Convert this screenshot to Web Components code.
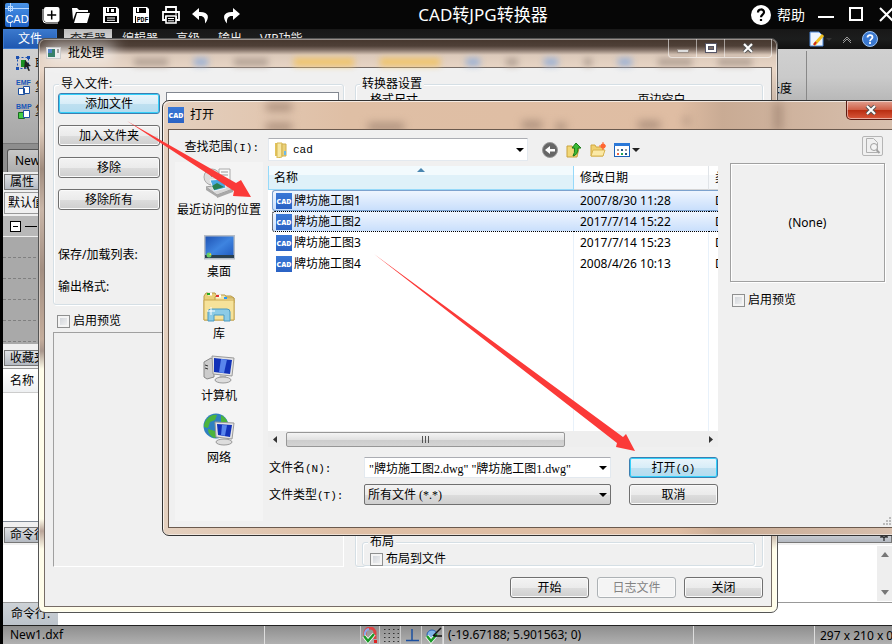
<!DOCTYPE html>
<html lang="zh-CN">
<head>
<meta charset="utf-8">
<title>CAD转JPG转换器</title>
<style>
html,body{margin:0;height:100%;overflow:hidden}
body{font:12px/16px "Noto Sans","Noto Sans CJK SC",sans-serif;color:#000;background:#000}
</style>
</head>
<body>
<app-shell>
  <title-bar slot="top"></title-bar>
  <ribbon-tabs slot="top"></ribbon-tabs>
  <ribbon-panel slot="top"></ribbon-panel>
  <side-panels></side-panels>
  <status-bar slot="bottom"></status-bar>
</app-shell>
<batch-dialog></batch-dialog>
<open-dialog></open-dialog>
<pointer-arrows></pointer-arrows>

<script>
const base = `<style>
*{box-sizing:border-box}
button,input,select{font:inherit;color:inherit;margin:0}
.plain{border:0;background:none;padding:0;display:block}
svg{display:block}
</style>`;
function define(name, html) {
  const t = document.createElement('template');
  t.innerHTML = base + html;
  customElements.define(name, class extends HTMLElement {
    constructor() {
      super();
      this.attachShadow({mode: 'open'}).append(t.content.cloneNode(true));
    }
    connectedCallback() {
      const root = this.shadowRoot;
      root.querySelectorAll('[data-attr]').forEach(n => { n.textContent = this.getAttribute(n.dataset.attr) || ''; });
      if (this.hasAttribute('disabled')) root.querySelectorAll('button').forEach(b => { b.disabled = true; });
    }
  });
}

define('cad-icon', `<style>:host{display:block;width:16px;height:16px;flex:none}svg{width:100%;height:100%}</style>
<svg viewBox="0 0 16 16"><defs><linearGradient id="g" x2="0" y2="1"><stop stop-color="#3a78d6"/><stop offset="1" stop-color="#2a62c4"/></linearGradient></defs><rect width="16" height="16" fill="url(#g)"/><text x="8" y="11" text-anchor="middle" font-family="Open Sans" font-weight="800" font-size="7" fill="#fff">CAD</text></svg>`);

define('title-bar', `<style>
:host{display:flex;align-items:center;height:29px;background:#060606;color:#fff;padding:0 0 0 2px;position:relative}
.tools{display:flex;gap:12px;align-items:center;flex:1;margin-left:13px}
.tools svg{width:18px;height:18px}
h1{font-size:17px;line-height:28px;font-weight:400;margin:0 0 0 32px}
.end{flex:1;display:flex;justify-content:flex-end;align-items:center}
.help{display:flex;gap:6px;align-items:center;font-size:14px;margin-right:13px}
.win{display:flex;gap:14px;margin-right:-2px}
</style>
<svg width="24" height="24" viewBox="0 0 24 24"><defs><linearGradient id="b" x2="0" y2="1"><stop stop-color="#4a94e8"/><stop offset="1" stop-color="#1d5fc4"/></linearGradient></defs><rect width="24" height="24" rx="2" fill="url(#b)"/><path d="M5.500 0v9M5.500 20v4M0 5.500h24" stroke="#b8d8ff" fill="none"/><rect x="3.500" y="3.500" width="4" height="4" fill="none" stroke="#b8d8ff"/><text x="12" y="20" text-anchor="middle" font-family="Liberation Sans" font-size="11" fill="#fff">CAD</text></svg>
<div class="tools">
<button class="plain" aria-label="新建"><svg viewBox="0 0 18 18"><path d="M1 3v11a3 3 0 0 0 3 3h12" fill="none" stroke="#fff"/><rect x="2" y="1" width="15.500" height="15" rx="2" fill="#fff"/><path d="M9.700 4.500v9M5.200 9h9" stroke="#000" stroke-width="1.500"/></svg></button>
<button class="plain" aria-label="打开"><svg viewBox="0 0 18 18"><path d="M0 2h5l2 2h9v2H4L1 14z" fill="#fff"/><path d="M5 7h13l-3 10H2z" fill="#fff"/></svg></button>
<button class="plain" aria-label="保存"><svg viewBox="0 0 18 18"><path d="M1 1h14l2 2v14H1z" fill="#fff"/><path d="M4 2h10v5H4zM3 10h12v6H3z" fill="#000"/><path d="M5 2h2v4H5zM5 11.500h8v1H5zM5 13.700h8v1H5zM9 3h3v3H9z" fill="#fff"/></svg></button>
<button class="plain" aria-label="保存为PDF"><svg viewBox="0 0 18 18"><path d="M1 1h14l2 2v14H1z" fill="#fff"/><path d="M4 2h10v5H4zM3 10h14v7H3z" fill="#000"/><path d="M5 2h2v4H5z" fill="#fff"/><rect x="4" y="10" width="13" height="7" fill="#fff"/><text x="10.500" y="16" text-anchor="middle" font-family="Liberation Mono" font-weight="bold" font-size="6.500" fill="#000">PDF</text></svg></button>
<button class="plain" aria-label="打印"><svg viewBox="0 0 18 18"><path d="M4 5V1h10v4M1 6h16v8h-3v-3H4v3H1z" fill="none" stroke="#fff" stroke-width="1.800"/><path d="M4 10h10v7H4z" fill="#000" stroke="#fff" stroke-width="1.600"/><path d="M6 12.500h6M6 14.800h6M13 8h2" stroke="#fff"/></svg></button>
<button class="plain" aria-label="撤销"><svg viewBox="0 0 18 18"><path d="M7 2L0 8l7 6v-4c4-.5 6.500 1 6 7.500 5-6 4-12-6-11.500z" fill="#fff"/></svg></button>
<button class="plain" aria-label="重做"><svg viewBox="0 0 18 18"><path d="M11 2l7 6-7 6v-4c-4-.5-6.500 1-6 7.500-5-6-4-12 6-11.500z" fill="#fff"/></svg></button>
</div>
<h1>CAD转JPG转换器</h1>
<div class="end">
<button class="plain help"><svg width="20" height="20" viewBox="0 0 20 20"><circle cx="10" cy="10" r="10" fill="#fff"/><path d="M7 7.500C7 3.500 13 3.500 13 7.300c0 2.300-3 2.500-3 5M10 14v2" stroke="#000" stroke-width="2.200" fill="none"/></svg><span>帮助</span></button>
<div class="win">
<button class="plain" aria-label="最小化"><svg width="16" height="16"><path d="M0 10h16" stroke="#fff" stroke-width="2"/></svg></button>
<button class="plain" aria-label="最大化"><svg width="16" height="16"><rect x="2" y="1" width="12" height="12" fill="none" stroke="#fff" stroke-width="2"/></svg></button>
<button class="plain" aria-label="关闭"><svg width="16" height="16"><path d="M2 1l13 13M15 1L2 14" stroke="#fff" stroke-width="2"/></svg></button>
</div></div>`);

define('ribbon-tabs', `<style>
:host{display:flex;height:20px;background:linear-gradient(#181818,#1c1d1d 50%,#111);color:#eee;align-items:stretch}
button{line-height:18px!important}
.file{background:linear-gradient(#3a78cc,#1f58b0);width:54px;color:#fff;border:1px solid #3c7ad0}
.on{background:linear-gradient(#bbb,#eee);color:#222;width:48px;margin:0 10px 0 7px}
nav{display:flex;flex:1}
.gap{margin-right:18px}
.end{display:flex;align-items:center;gap:10px;margin-right:14px}
</style>
<nav><button class="plain file">文件</button><button class="plain on">查看器</button><button class="plain gap">编辑器</button><button class="plain gap">高级</button><button class="plain gap">输出</button><button class="plain">VIP功能</button></nav>
<div class="end">
<button class="plain" aria-label="样式"><svg width="23" height="16"><path d="M1 1h9l4 4v10H1z" fill="#eef5ff" stroke="#4a86d8"/><path d="M5 14L14 4" stroke="#f0c020" stroke-width="3"/><path d="M5 14l2-3" stroke="#c22" stroke-width="2"/><path d="M17 7h6l-3 3z" fill="#333"/></svg></button>
<button class="plain" aria-label="折叠"><svg width="10" height="9"><path d="M1 6l4-4 4 4M1 8l4-4 4 4" fill="none" stroke="#999"/></svg></button>
<button class="plain" aria-label="帮助"><svg width="16" height="16"><circle cx="8" cy="8" r="7.500" fill="#3a78d0" stroke="#9cc4f4"/><path d="M5.500 6.500C5.500 3.300 10.500 3.300 10.500 6.200c0 1.800-2.500 2-2.500 4M8 11v2" stroke="#fff" stroke-width="1.800" fill="none"/></svg></button>
</div>`);

define('ribbon-panel', `<style>
:host{display:flex;height:94px;background:linear-gradient(#d0d0d0,#cacaca 30%,#b4b4b4 60%,#a6a6a6);border-bottom:1px solid #777;justify-content:space-between}
ul{list-style:none;margin:0;padding:7px 0 0 13px;display:flex;flex-direction:column;gap:7px}
.len{border-right:1px solid #888;margin:2px 85px 2px 0;padding:30px 14px 0 0}
button{display:flex!important;gap:3px}
</style>
<ul>
<li><button class="plain"><svg width="16" height="16"><rect x="1.500" y="1.500" width="11" height="11" fill="none" stroke="#1c50b0" stroke-dasharray="2 2"/><path d="M0 0h3v3H0zM11 0h3v3h-3zM0 11h3v3H0z" fill="#1c50b0"/><path d="M5 4h5v7H5z" fill="#1a9020"/><path d="M9 4l6 6-3 .4 2 4-1.500.6-2-4L8 13z" fill="#222"/></svg>取</button></li>
<li><button class="plain"><svg width="16" height="17"><text x="0" y="6" font-family="Liberation Sans" font-weight="bold" font-size="7" fill="#1856b8">EMF</text><path d="M2.500 9.500h6v6h-6zM7.500 7.500h6v7h-6z" fill="#fff" stroke="#1c50a0"/></svg>复</button></li>
<li><button class="plain"><svg width="16" height="17"><text x="0" y="6" font-family="Liberation Sans" font-weight="bold" font-size="7" fill="#1856b8">BMP</text><path d="M2.500 9.500h6v6h-6z" fill="#4c4" stroke="#186a20"/><path d="M7.500 7.500h6v7h-6z" fill="#fff" stroke="#1c50a0"/></svg>复</button></li>
</ul>
<div class="len">长度</div>`);

define('panel-head', `<style>
:host{display:flex;height:16px;margin:0 0 2px 1px;padding-left:5px;border:1px solid #777;background:linear-gradient(#e0e2e5,#b4b9c1);line-height:14px;align-items:center;justify-content:space-between;white-space:nowrap;flex:none}
</style><slot></slot><svg width="14" height="12"><path d="M3 8h8M5 8V3h4v5M7 8v4" stroke="#000" fill="none"/></svg>`);

define('side-panels', `<style>
:host{flex:1;display:flex;flex-direction:column;min-height:0;background:#f0f0f0}
.tabs{height:28px;background:#8e8e8e;padding:5px 0 0 4px;flex:none}
.tabs button{background:linear-gradient(#c8c8c8,#adadad);border:1px solid #555;border-bottom:0;border-radius:3px 3px 0 0;height:23px;width:90px;text-align:left;padding:0 0 0 7px}
.val{height:22px;border:1px solid #999;background:#f0f0f0;padding:2px 3px;margin:0 0 2px 1px;display:block;width:180px;text-align:left;flex:none}
.tree{height:128px;background:#a9a9a9;display:flex;flex-direction:column;flex:none;overflow:hidden}
.tree div{height:21px;flex:none;border-bottom:1px dashed #808080}
.tree .node{background:#b8b8b8;border-bottom:1px solid #eee;display:flex;align-items:center;padding-left:7px}
.list{background:#fff;flex:1;border-bottom:1px solid #808a96;border-top:1px solid #999;min-height:0}
.list div{background:linear-gradient(#fff,#eef0f2);border-bottom:1px solid #ccc;padding:4px 7px;height:24px}
.log{height:58px;background:#fff;border-bottom:1px solid #999;display:flex;justify-content:flex-end;flex:none}
.sb{width:15px;margin:1px 0;background:#eee;display:flex;flex-direction:column;justify-content:space-between;align-items:center;padding:6px 0}
.cmd{height:22px;display:flex;background:#fff;flex:none}
.cmd label{background:linear-gradient(#cdd2d6,#bcc3cb);width:55px;padding:3px 7px 0 8px;white-space:nowrap}
.cmd input{flex:1;border:0;min-width:0;background:#fff}
</style>
<div class="tabs"><button>New1.dxf</button></div>
<panel-head style="margin-top:2px">属性</panel-head>
<button class="val">默认值</button>
<div class="tree"><div class="node"><svg width="28" height="12"><rect x=".5" y="1.500" width="10" height="10" fill="#fff" stroke="#000"/><path d="M3 6.500h5M15 6.500h12" stroke="#000"/></svg></div><div></div><div></div><div></div><div></div><div></div></div>
<panel-head style="margin-top:6px">收藏夹</panel-head>
<div class="list"><div>名称</div></div>
<panel-head style="margin-top:5px">命令行</panel-head>
<div class="log"><div class="sb"><svg width="8" height="5"><path d="M0 5l4-5 4 5z" fill="#777"/></svg><svg width="8" height="5"><path d="M0 0l4 5 4-5z" fill="#777"/></svg></div></div>
<div class="cmd"><label for="c">命令行:</label><input id="c"></div>`);

define('status-bar', `<style>
:host{display:flex;height:18px;flex:none;background:linear-gradient(#8e8e8e,#b0b0b0);border-top:1px solid #222;line-height:17px;white-space:nowrap}
div,output{border-right:1px solid #ddd;padding:0 7px;overflow:hidden}
.a{width:262px}.b{flex:1;border-color:#ccc}.i{display:flex;gap:3px;padding:0 0 0 1px}.c{width:250px;padding:0 4px}.d{width:121px}.e{width:77px;border:0;padding:0 0 0 5px;display:flex;justify-content:space-between;align-items:flex-end}
.i button{border-right:1px solid #ccc!important}
</style>
<div class="a">New1.dxf</div><div class="b"></div>
<div class="i">
<button class="plain" aria-label="捕捉"><svg width="17" height="17"><path d="M3 12V6a5 5 0 0 1 10 0v6" fill="none" stroke="#d44" stroke-width="3"/><path d="M3 11V6a5 5 0 0 1 4-4" fill="none" stroke="#8ae" stroke-width="2"/><path d="M2 9l4 5 6-7" stroke="#fff" stroke-width="4" fill="none"/><path d="M2 9l4 5 6-7" stroke="#1a9a28" stroke-width="2.500" fill="none"/><path d="M12 13h3v3h-3z" fill="#d22"/></svg></button>
<button class="plain" aria-label="栅格"><svg width="17" height="17"><path d="M1 2.500h15M1 6.500h15M1 10.500h15M1 14.500h15" stroke="#333" stroke-dasharray="1.500 3"/></svg></button>
<button class="plain" aria-label="正交"><svg width="17" height="17"><path d="M8 2v11M2 13.500h13" stroke="#1c50a0" stroke-width="1.500"/></svg></button>
<button class="plain" aria-label="对象捕捉"><svg width="17" height="17"><circle cx="7" cy="8" r="5" fill="#7fb4e8" stroke="#2a60b0"/><path d="M2 9l4 5 6-7" stroke="#fff" stroke-width="4" fill="none"/><path d="M2 9l4 5 6-7" stroke="#1a9a28" stroke-width="2.500" fill="none"/><path d="M8 9l8-8M9 9h8" stroke="#111" stroke-width="1.500"/></svg></button>
</div>
<output class="c">(-19.67188; 5.901563; 0)</output><div class="d"></div><div class="e">297 x 210 x 0<svg width="8" height="12"><path d="M6 0h2v2H6zM2 4h2v2H2zM6 4h2v2H6zM0 8h2v2H0zM3 8h2v2H3zM6 8h2v2H6z" fill="#333"/></svg></div>`);

define('app-shell', `<style>:host{display:flex;flex-direction:column;height:100vh;padding-left:3px;background:#000}</style>
<slot name="top"></slot><slot></slot><slot name="bottom"></slot>`);

define('win-button', `<style>
:host{display:block;height:21px}
button{width:100%;height:100%;padding:0;border:1px solid #707070;border-radius:3px;background:linear-gradient(#f3f3f3,#ebebeb 50%,#dddddd 51%,#cfcfcf);box-shadow:inset 0 0 0 1px #fafafa;line-height:17px}
:host([hot]) button{border-color:#3c7fb1;background:linear-gradient(#eaf5fb,#d8edf8 50%,#bfe0f0 51%,#b2dcf0);box-shadow:inset 0 0 0 1px #35d0fa}
button:disabled{border-color:#adb2b5;background:#f4f4f4;color:#838383}
</style><button><slot></slot></button>`);

define('win-check', `<style>
:host{display:block}
label{display:flex;align-items:center;gap:3px;height:14px;white-space:nowrap}
input{appearance:none;width:13px;height:13px;border:1px solid #8e8f8f;background:linear-gradient(135deg,#cbcfd5,#f6f6f6);box-shadow:inset 0 0 0 2px #f4f4f4}
</style><label><input type="checkbox"><slot></slot></label>`);

define('group-box', `<style>
:host{display:block;min-width:0}
fieldset{margin:0;height:100%;min-width:0;border:1px solid #d5dfe5;border-radius:3px;padding:var(--pad,0);box-shadow:inset 1px 1px #fff,1px 1px #fff;display:flex;flex-direction:column}
legend{padding:0 2px;margin-left:var(--shift,0);line-height:16px;background:#f0f0f0}
</style><fieldset><legend data-attr="label"></legend><slot></slot></fieldset>`);

define('batch-dialog', `<style>
:host{position:absolute;inset:38px 114px 31px 38px;display:flex;flex-direction:column;border:1px solid #555;border-radius:7px;overflow:hidden;padding:0 5px 5px;
background:linear-gradient(#45372e,#4f4037 7px,#85746a 11px,#dccabb 16px,#e9d6c6 30px,#cdb9a9 60px,#e0cdbd 90px,#a08c7e 130px,#c9b6a8 170px,#a38f82 230px,#c4ad9c 300px,#a8968c 312px,#fffdea 330px,#fffdea 480px,#b9a498 492px,#fffdea 510px);box-shadow:inset 0 0 0 1px #ffffff70}
header{height:28px;display:flex;align-items:center;padding-left:2px;gap:7px;position:relative;flex:none}
h2{margin:0;font-size:12px;font-weight:400;flex:1;position:relative}
.ctl{display:flex;align-self:flex-start;border:1px solid #ffffff90;border-top:0;border-radius:0 0 4px 4px;position:relative;height:19px}
.ctl button{width:28px;height:18px;border-right:1px solid #ffffff80;display:grid;place-items:center}
.ctl button:last-child{width:46px;border:0}
.blur{position:absolute;inset:19px 0 0 0;filter:blur(3px);display:flex;justify-content:space-between;padding:0 20px 0 90px}
.glow{position:absolute;left:0;top:4px;width:70px;height:20px;background:#ffffffa0;filter:blur(8px)}
.blur i{width:34px;height:8px;background:#b5a497}
.blur .o{background:#f0c468;width:60px}.blur .u{background:#9db2d4;width:14px}
main{flex:1;min-height:0;background:#f0f0f0;border:1px solid #766c66;display:flex;flex-direction:column;padding:8px}
.cols{flex:1;display:flex;gap:11px;min-height:0}
.left{flex:291;display:flex;flex-direction:column;min-width:0}
.right{flex:408;--pad:0 7px 0 6px;--shift:-2px}
.right group-box{--pad:0;--shift:5px}
.in{display:flex;gap:6px}
.btns{width:102px;display:flex;flex-direction:column;gap:11px;padding-top:1px;flex:none}
.btns p{margin:0;white-space:nowrap}
.files{flex:1;border:1px solid #828790;background:#fff;height:205px;min-width:0}
.prev{flex:1;border:1px solid #a0a0a0;border-right-color:#fff;border-bottom-color:#fff}
win-check{margin:9px 0 4px 4px}
.pair{display:flex;gap:8px}
.pair group-box{height:200px;flex:265}.pair group-box+group-box{flex:128}
.lay{margin-top:auto;height:32px}.lay win-check{margin:2px 0 0 7px}
footer{display:flex;justify-content:flex-end;gap:8px;padding:10px 0 0}
footer win-button{width:79px}
</style>
<header><div class="glow"></div><div class="blur"><i></i><i class="u"></i><i></i><i class="o"></i><i class="o"></i><i class="u"></i><i style="width:12px"></i><i class="u"></i><i style="width:8px"></i><i class="u"></i><i></i><i></i></div>
<svg width="15" height="12" viewBox="0 0 15 12" style="position:relative"><rect x=".5" y=".5" width="14" height="11" fill="#eee" stroke="#ccc"/><path d="M2 2h7v8H2z" fill="#38806a"/><path d="M2 2h4v4H2z" fill="#5080c8"/><path d="M12 2v4" stroke="#555"/></svg>
<h2>批处理</h2>
<div class="ctl"><button class="plain" aria-label="最小化"><svg width="12" height="10"><rect x=".5" y="6.500" width="11" height="3" fill="#ddd" stroke="#998d85"/></svg></button><button class="plain" aria-label="最大化"><svg width="12" height="10"><rect x="2" y="2" width="8" height="6" fill="#776a64" stroke="#fff" stroke-width="2"/><rect x=".5" y=".5" width="11" height="9" fill="none" stroke="#556"/><rect x="3.500" y="3.500" width="5" height="3" fill="none" stroke="#556"/></svg></button><button class="plain" aria-label="关闭"><svg width="12" height="10"><path d="M2 1l8 8M10 1L2 9" stroke="#555" stroke-width="4"/><path d="M2 1l8 8M10 1L2 9" stroke="#fff" stroke-width="2"/></svg></button></div>
</header>
<main><div class="cols">
<div class="left">
<group-box label="导入文件:" style="--pad:0 4px 4px;--shift:1px"><div class="in"><div class="btns"><win-button hot>添加文件</win-button><win-button>加入文件夹</win-button><win-button>移除</win-button><win-button>移除所有</win-button><p style="padding-top:26px">保存/加载列表:</p><p style="padding:5px 0 5px">输出格式:</p></div><div class="files"></div></div></group-box>
<win-check>启用预览</win-check>
<div class="prev"></div>
</div>
<group-box class="right" label="转换器设置"><div class="pair"><group-box label="格式尺寸"></group-box><group-box label="页边空白"></group-box></div>
<group-box class="lay" label="布局"><win-check>布局到文件</win-check></group-box></group-box>
</div>
<footer><win-button>开始</win-button><win-button disabled>日志文件</win-button><win-button>关闭</win-button></footer>
</main>`);

define('place-item', `<style>:host{display:block}a{display:flex;flex-direction:column;align-items:center;gap:4px;color:inherit;text-decoration:none;height:62px;justify-content:flex-end;white-space:nowrap}
:host(:first-child) a{height:56px}</style><a href="#"><slot></slot><span data-attr="label"></span></a>`);

define('file-table', `<style>
:host{display:flex;flex-direction:column;background:#fff;overflow:hidden;min-height:0;position:relative}
.view{flex:1;overflow:hidden;background:linear-gradient(90deg,transparent 305px,#e8f1fa 305px 306px,transparent 306px 440px,#e8f1fa 440px 441px,transparent 441px)}
table{table-layout:fixed;width:540px;border-collapse:separate;border-spacing:0}
th,td{height:21px;padding:0 0 0 6px;font-weight:400;text-align:left;white-space:nowrap}
th{height:24px;background:linear-gradient(#fff 9px,#f6f8fa 9px);border-bottom:1px solid #d5d5d5;border-right:1px solid #e0e4e8}
th:first-child{background:linear-gradient(#f2fafd 9px,#dff1f9 9px);border:1px solid #96d9f9;border-top:0;padding-left:5px;background-clip:padding-box}
td:first-child{padding:0 0 0 4px}
td div{display:flex;align-items:center;gap:2px;height:21px;padding-left:4px}
.s td:not(:first-child),.s div{background:linear-gradient(#eff5fe,#c9dffc);border-top:1px solid #7da2ce;border-bottom:1px solid #7da2ce}
.s div{border-left:1px solid #7da2ce;border-radius:3px 0 0 3px;padding-left:3px}
.f td:not(:first-child),.f div{border-top:1px dotted #000;border-bottom:1px dotted #000}
.f div{border-left:1px dotted #000}
.up{position:absolute;top:2px;left:149px}
.sb{height:16px;display:flex;align-items:center;background:#eee;padding:0 4px;justify-content:space-between}
.sb i{height:15px;border:1px solid #979797;border-radius:2px;background:linear-gradient(#f4f4f4,#e2e2e2 50%,#ccc 51%,#d4d4d4);width:279px;margin:0 auto 0 9px;display:grid;place-items:center}
</style>
<div class="view"><table><colgroup><col style="width:306px"><col style="width:135px"><col></colgroup>
<thead><tr><th>名称</th><th>修改日期</th><th>类型</th></tr></thead>
<tbody>
<tr class="s"><td><div><cad-icon></cad-icon>牌坊施工图1</div></td><td>2007/8/30 11:28</td><td>DWG 文件</td></tr>
<tr class="s f"><td><div><cad-icon></cad-icon>牌坊施工图2</div></td><td>2017/7/14 15:22</td><td>DWG 文件</td></tr>
<tr><td><div><cad-icon></cad-icon>牌坊施工图3</div></td><td>2017/7/14 15:23</td><td>DWG 文件</td></tr>
<tr><td><div><cad-icon></cad-icon>牌坊施工图4</div></td><td>2008/4/26 10:13</td><td>DWG 文件</td></tr>
</tbody></table></div>
<svg class="up" width="8" height="4"><path d="M0 4l4-4 4 4z" fill="#4a86b0"/></svg>
<div class="sb"><svg width="5" height="7"><path d="M5 0v7L1 3.500z" fill="#333"/></svg><i><svg width="8" height="7"><path d="M.5 0v7M3.500 0v7M6.500 0v7" stroke="#555"/></svg></i><svg width="5" height="7"><path d="M0 0v7l4-3.500z" fill="#333"/></svg></div>`);

define('open-dialog', `<style>
:host{position:absolute;inset:100px -8px 108px 162px;display:flex;flex-direction:column;border:1px solid #333;border-radius:7px;overflow:hidden;padding:0 5px 7px;background:linear-gradient(90deg,#e4d0bf,#dfbfa5 25%,#dfbda3 70%,#c9ab94 76%,#d8c0ae);box-shadow:inset 1px 1px #ffffffb0,inset -1px -1px #ffffff80}
header{height:28px;display:flex;align-items:center;gap:6px;position:relative;flex:none}
header>*{position:relative}
h2{margin:0;font-size:12px;font-weight:400;flex:1}
.x{align-self:flex-start;width:48px;height:19px;border:1px solid #5a1a12;border-top:0;border-radius:0 0 0 5px;background:linear-gradient(#e0a090,#d06048 48%,#b82c10 50%,#d8583c);box-shadow:inset 0 0 0 1px #ffffff80;padding:0 0 0 18px}
.blur{position:absolute;inset:2px 0 0 0;filter:blur(4px)}
.blur i{position:absolute;width:26px;height:8px;background:#ab8f7c}
main{flex:1;min-height:0;background:#f0f0f0;border:1px solid #6b5a4e;display:flex;padding-right:8px;position:relative}
.l{width:99px;display:flex;flex-direction:column;flex:none}
.l label{height:32px;padding:9px 9px 0 0;text-align:right;white-space:nowrap}
small{font:11px "Liberation Mono",monospace}
nav{flex:1;background:#f4f4f4;margin:0 5px 6px 6px}
.m{flex:1;display:flex;flex-direction:column;min-width:0;padding:8px 0 22px}
.r{width:155px;flex:none;margin-left:12px;display:flex;flex-direction:column;padding-top:6px}
.top{display:flex;align-items:center;gap:8px;margin-bottom:5px}
.field{display:grid;align-items:center;height:21px}
.field>*{grid-area:1/1}
.field select,.field input{appearance:none;width:100%;height:100%;border:1px solid #e3e9ef;border-top-color:#abadb3;border-radius:1px;background:#fff;padding:0 20px 0 4px;font-family:"Liberation Serif","Noto Sans CJK SC",serif;outline:0}
.field .type{border:1px solid #707070;border-radius:2px;background:linear-gradient(#f3f3f3,#ebebeb 50%,#ddd 51%,#cfcfcf);padding-left:3px}
.field .arr{justify-self:end;margin-right:4px;pointer-events:none}
.look{width:260px;height:23px;margin-right:6px}
.field.look select{padding-left:24px;font:11px "Liberation Mono",monospace}
.look .ic{margin-left:5px}
file-table{flex:1}
form{display:grid;grid-template-columns:96px 1fr 89px;row-gap:6px;margin:10px 0 0;align-items:center}
form .field{margin-right:18px}
form label{padding-left:1px}
.pv{height:119px;border:1px solid #a0a0a0;box-shadow:inset 1px 1px #fff,1px 1px #fff;display:grid;place-items:center}
.q{align-self:flex-end;margin:0 2px 7px 0;border:1px solid #b5b5b5;border-radius:2px;width:21px;height:20px;padding:1px}
win-check{margin:11px 0 0 2px}
.grip{position:absolute;right:2px;bottom:1px}
</style>
<header><div class="blur"><i style="left:98px;top:0"></i><i style="left:98px;top:20px"></i><i style="left:200px;top:20px;width:36px"></i><i style="left:354px;top:18px;width:20px"></i><i style="left:388px;top:20px;width:10px"></i><i style="left:470px;top:18px;width:22px"></i><i style="left:516px;top:14px;width:5px"></i><i style="left:606px;top:0;width:8px;height:28px"></i></div>
<cad-icon></cad-icon><h2>打开</h2><button class="plain x" aria-label="关闭"><svg width="12" height="10"><path d="M2 1l8 8M10 1L2 9" stroke="#555" stroke-width="4"/><path d="M2 1l8 8M10 1L2 9" stroke="#fff" stroke-width="2"/></svg></button></header>
<main>
<div class="l"><label for="look">查找范围<small>(I):</small></label>
<nav>
<place-item label="最近访问的位置"><svg width="32" height="30" viewBox="0 0 32 30"><circle cx="9" cy="9" r="8" fill="#ddd" stroke="#aaa"/><path d="M9 9l-4-5" stroke="#888"/><path d="M16 1h11v14H16z" fill="#fafafa" stroke="#aaa"/><path d="M18 4h7M18 7h7" stroke="#999"/><path d="M3 19l18-3 9 5-16 6z" fill="#d8d8d8" stroke="#999"/><path d="M3 19l11 8v2L3 22zM14 27l16-6v3l-16 6z" fill="#a8a8a8"/><path d="M7 12l14-1 2 9-12 3z" fill="#4aa8e0" stroke="#f8f8f8"/><path d="M9 18l5-3 7 4-10 3z" fill="#2a8050"/></svg></place-item>
<place-item label="桌面"><svg width="31" height="25" viewBox="0 0 31 25"><defs><linearGradient id="d" x2="1" y2="1"><stop stop-color="#1d4fb0"/><stop offset=".5" stop-color="#3e84e0"/><stop offset="1" stop-color="#1c55bb"/></linearGradient></defs><rect x=".5" y=".5" width="30" height="23" fill="url(#d)" stroke="#b5bcc5" stroke-width="2"/><path d="M1 20h29v3H1z" fill="#2a4050"/><circle cx="5" cy="20" r="2.500" fill="#6c6"/><path d="M5 20h2v-2z" fill="#fc3"/></svg></place-item>
<place-item label="库"><svg width="32" height="30" viewBox="0 0 32 30"><path d="M1 4l2-3h9l2 3h14l3 2v22H1z" fill="#e9cf78" stroke="#b89a4a"/><path d="M12 5l2-2h8l2 3h7v5H12z" fill="#f5e6a8" stroke="#b89a4a"/><path d="M5 2h4M13 4h5" stroke="#fff" stroke-width="3"/><path d="M4 2h3" stroke="#2a2" stroke-width="2"/><path d="M13 4h3" stroke="#d33" stroke-width="2"/><path d="M21 6h3" stroke="#29f" stroke-width="2"/><path d="M1 8h30v20H1z" fill="#f6e29a" stroke="#c9a850"/><path d="M5 29V20q0-3 3-3h16q3 0 3 3v9h-6v-6H11v6z" fill="#8ccbe6" stroke="#4a9ac0"/><path d="M8 15v8M4 19h8" stroke="#fff"/></svg></place-item>
<place-item label="计算机"><svg width="32" height="29" viewBox="0 0 32 29"><path d="M1 7l7-4 3 2v17l-7 2-3-2z" fill="#ccc" stroke="#888"/><path d="M2 10l3 1M2 13l3 1" stroke="#333"/><path d="M9 1l22 2-2 18-19-2z" fill="#e4e4e4" stroke="#999"/><path d="M11 3l18 2-2 14-16-2z" fill="#1232b8"/><path d="M18 4l6 .6-3 13.500-5-.6z" fill="#5a86ec"/><path d="M17 20l6 1 1 3h-8z" fill="#bbb"/><ellipse cx="20" cy="25" rx="8" ry="3" fill="#ddd" stroke="#999"/></svg></place-item>
<place-item label="网络"><svg width="32" height="33" viewBox="0 0 32 33"><circle cx="13" cy="13" r="12.500" fill="#3080c0"/><path d="M4 6q5-5 10-4l-2 5-5 2-2 6-4-1q0-5 3-8zM5 16l7 2 2 6-3 1q-6-3-6-9zM18 2q6 3 7 9h-7z" fill="#4cb43c"/><path d="M12 9l19 1-2 16-16-2z" fill="#e4e4e4" stroke="#999"/><path d="M14 11l15 1-2 12-12-2z" fill="#1232b8"/><path d="M19 12l5 .3-2 10.500-4-.6z" fill="#5a86ec"/><ellipse cx="21" cy="29" rx="8" ry="3" fill="#ddd" stroke="#999"/></svg></place-item>
</nav></div>
<div class="m">
<div class="top"><div class="field look"><select id="look"><option>cad</option></select>
<svg class="ic" width="16" height="16"><path d="M2 1h6v13H2z" fill="#e2c35c"/><path d="M4 1h5v14l-5 1z" fill="#f7e7a2" stroke="#d8b850"/><path d="M9 2h4v12H9z" fill="#ead078" stroke="#d0b050"/><path d="M12 9v4" stroke="#6bb8e8" stroke-width="2"/></svg>
<svg class="arr" width="8" height="4"><path d="M0 0h8L4 4z"/></svg></div>
<button class="plain" aria-label="后退"><svg width="16" height="16"><circle cx="8" cy="8" r="7.500" fill="#666" stroke="#999"/><path d="M3 8l5-4v3h5v2.500H8V12z" fill="#fff"/></svg></button>
<button class="plain" aria-label="向上"><svg width="16" height="16"><path d="M1 4h5l1 2h6l-2 9H1z" fill="#f2d878" stroke="#c9a23c"/><path d="M10 1l5 5h-3q0 7-5 8 2-3 1.500-8H6z" fill="#3cba34" stroke="#1a7a1a"/></svg></button>
<button class="plain" aria-label="新建文件夹"><svg width="16" height="16"><path d="M1 3h4l1 2h7v9H1z" fill="#f0d070" stroke="#d0a840"/><path d="M3 8h12l-2 6H1z" fill="#fbe9a6" stroke="#d8b450"/><circle cx="13" cy="4" r="2.500" fill="#f63"/><path d="M13 0v8M9 4h8" stroke="#f63"/></svg></button>
<button class="plain" aria-label="视图"><svg width="26" height="16"><rect x=".5" y="1.500" width="15" height="13" fill="#fff" stroke="#1a60b8"/><path d="M0 1h16v3H0z" fill="#2a78d8"/><path d="M3 7h2v2H3zM11 7h2v2h-2z" fill="#999"/><path d="M7 7h2v2H7zM11 11h2v2h-2z" fill="#258"/><path d="M3 11h2v2H3z" fill="#e64"/><path d="M7 11h2v2H7z" fill="#2a5"/><path d="M18 6h8l-4 4z" fill="#222"/></svg></button>
</div>
<file-table></file-table>
<form onsubmit="return false">
<label for="fn">文件名<small>(N):</small></label><div class="field"><input id="fn" value='"牌坊施工图2.dwg" "牌坊施工图1.dwg"'><svg class="arr" width="8" height="4"><path d="M0 0h8L4 4z"/></svg></div><win-button hot>打开<small>(O)</small></win-button>
<label for="ft">文件类型<small>(T):</small></label><div class="field"><select class="type" id="ft"><option>所有文件 (*.*)</option></select><svg class="arr" width="8" height="4"><path d="M0 0h8L4 4z"/></svg></div><win-button>取消</win-button>
</form></div>
<div class="r"><button class="plain q" aria-label="预览"><svg width="17" height="16"><path d="M2.500.5h7l4 4v10h-11z" fill="none" stroke="#b0b0b0"/><circle cx="10" cy="9" r="3.500" fill="#f4f4f4" stroke="#a0a0a0"/><path d="M12.500 12l3 3" stroke="#a0a0a0" stroke-width="2"/></svg></button>
<div class="pv">(None)</div><win-check>启用预览</win-check></div>
<svg class="grip" width="9" height="9"><path d="M7 0h2v2H7zM4 3h2v2H4zM7 3h2v2H7zM1 6h2v2H1zM4 6h2v2H4zM7 6h2v2H7z" fill="#bbb"/></svg>
</main>`);

define('pointer-arrows', `<style>:host{position:absolute;inset:0;pointer-events:none;overflow:hidden}</style>
<svg width="892" height="644"><path d="M127 121L236 183l5-3 10 17-18-1 1-5z M374 254L623 437l3-3 9 17-19-4 1-4z" fill="#fb3a38"/></svg>`);
</script>
</body>
</html>
